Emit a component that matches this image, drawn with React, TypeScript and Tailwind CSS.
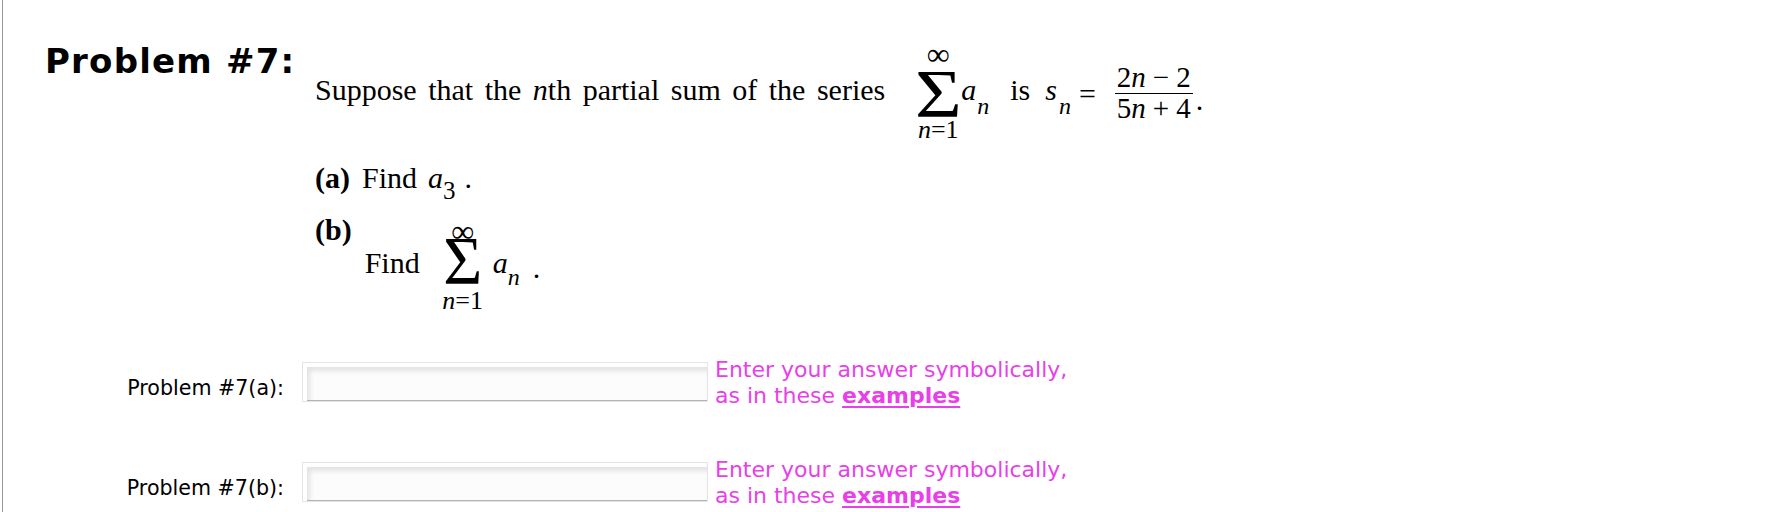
import React from "react";

type SumProps = { className: string; sigmaClass: string; nClass: string };

function Sum({ className, sigmaClass, nClass }: SumProps) {
  return (
    <div className={`flex w-[44px] shrink-0 flex-col items-center ${className}`}>
      <span className="block h-[14px] text-[32px] leading-[14px]">∞</span>
      <span className={`block h-[38px] text-[67px] leading-[38px] ${sigmaClass}`}>Σ</span>
      <span className={`block h-[18px] whitespace-nowrap text-[26px] leading-[18px] ${nClass}`}>
        <i>n</i>=1
      </span>
    </div>
  );
}

function AnswerRow({ label }: { label: string }) {
  return (
    <div className="flex h-[100px] items-start font-['DejaVu_Sans',sans-serif]">
      <div className="mt-[16px] w-[281px] shrink-0 text-right text-[20.6px] leading-none text-black">{label}</div>
      <div className="ml-[18px] h-[40px] w-[406px] shrink-0 border border-[#e4e4e4] bg-white pl-[4px] pt-[4px]">
        <input
          type="text"
          aria-label={label}
          className="block h-full w-full border-0 border-b border-[#b3b3b3] bg-[#fcfcfc] shadow-[inset_3px_4px_5px_rgba(0,0,0,0.1)] outline-none"
        />
      </div>
      <div className="-mt-[5px] ml-[7px] text-[22px] leading-[26px] text-[#e83fe8]">
        <div>Enter your answer symbolically,</div>
        <div>
          as in these{" "}
          <a href="#" className="font-bold text-[#e83fe8] underline decoration-[2px] underline-offset-[3px]">
            examples
          </a>
        </div>
      </div>
    </div>
  );
}

export default function App() {
  return (
    <div className="min-h-screen bg-white">
      <div className="ml-[2px] h-[512px] overflow-hidden border-l border-[#999]">
        <div className="flex h-[362px]">
          <div className="w-[312px] shrink-0">
            <h1 className="ml-[42px] mt-[44px] font-['DejaVu_Sans',sans-serif] text-[34px] font-bold leading-none tracking-[1.2px] text-black">
              Problem #7:
            </h1>
          </div>
          <div className="font-['Liberation_Serif',serif] text-black">
            <div className="flex h-[150px] items-start">
              <span className="mt-[75px] whitespace-nowrap text-[30px] leading-none [word-spacing:4px]">
                Suppose that the <i>n</i>th partial sum of the series
              </span>
              <Sum className="ml-[31px] mt-[47px]" sigmaClass="mt-[13px] scale-x-[1.2]" nClass="mt-[9px]" />
              <span className="ml-[1px] mt-[75px] text-[30px] italic leading-none">a</span>
              <span className="ml-[1px] mt-[94px] text-[24px] italic leading-none">n</span>
              <span className="ml-[21px] mt-[75px] text-[30px] leading-none">is</span>
              <span className="ml-[15px] mt-[75px] text-[30px] italic leading-none">s</span>
              <span className="ml-[2px] mt-[94px] text-[24px] italic leading-none">n</span>
              <span className="ml-[8px] mt-[79px] text-[30px] leading-none">=</span>
              <div className="ml-[19px] mt-[63px] flex flex-col items-stretch text-[29px] leading-none">
                <span className="whitespace-nowrap px-[2px] text-center">
                  2<i>n</i>
                  <span className="mx-[7px]">−</span>2
                </span>
                <span className="mt-[1px] h-[1px] bg-black" />
                <span className="whitespace-nowrap px-[2px] text-center">
                  5<i>n</i>
                  <span className="mx-[7px]">+</span>4
                </span>
              </div>
              <span className="ml-[3px] mt-[85px] text-[30px] leading-none">.</span>
            </div>
            <div className="flex h-[60px] items-start">
              <span className="mt-[13px] text-[30px] font-bold leading-none">(a)</span>
              <span className="ml-[12px] mt-[13px] text-[30px] leading-none">Find</span>
              <span className="ml-[11px] mt-[13px] text-[30px] italic leading-none">a</span>
              <span className="mt-[28px] text-[25px] leading-none">3</span>
              <span className="ml-[9px] mt-[13px] text-[30px] leading-none">.</span>
            </div>
            <div className="flex items-start">
              <span className="mt-[5px] text-[30px] font-bold leading-none">(b)</span>
              <span className="ml-[13px] mt-[38px] text-[30px] leading-none">Find</span>
              <Sum className="ml-[21px] mt-[14px]" sigmaClass="mt-[3px]" nClass="mt-[13px]" />
              <span className="ml-[8px] mt-[38px] text-[30px] italic leading-none">a</span>
              <span className="mt-[55px] text-[24px] italic leading-none">n</span>
              <span className="ml-[13px] mt-[43px] text-[30px] leading-none">.</span>
            </div>
          </div>
        </div>
        <AnswerRow label="Problem #7(a):" />
        <AnswerRow label="Problem #7(b):" />
      </div>
    </div>
  );
}
